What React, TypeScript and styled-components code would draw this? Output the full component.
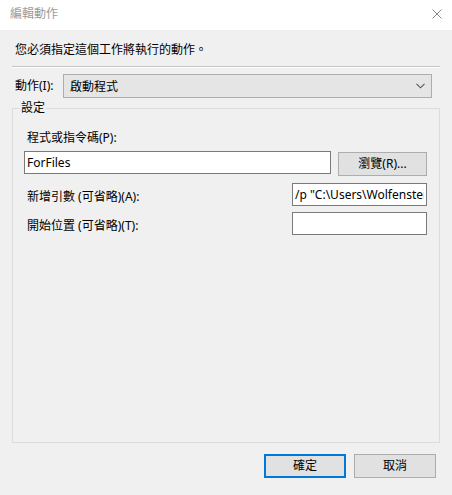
import React from "react";
import styled, { createGlobalStyle } from "styled-components";

const GlobalStyle = createGlobalStyle`
  html, body {
    margin: 0;
    padding: 0;
    background: #f0f0f0;
  }
  body {
    font-family: "Noto Sans", "Noto Sans CJK TC", sans-serif;
    font-size: 12px;
    color: #000;
  }
  * { box-sizing: border-box; }
`;

const Window = styled.div`
  width: 452px;
  height: 495px;
  display: flex;
  flex-direction: column;
  background: #f0f0f0;
  overflow: hidden;
`;

const TitleBar = styled.div`
  height: 30px;
  flex: none;
  background: #ffffff;
  display: flex;
  align-items: center;
  justify-content: space-between;
  padding: 0 10px 2px 10px;
`;

const Title = styled.span`
  color: #999999;
  font-size: 12px;
  line-height: 16px;
`;

const CloseIcon = styled.svg`
  width: 10px;
  height: 10px;
  display: block;
`;

const Body = styled.div`
  flex: 1;
  display: flex;
  flex-direction: column;
  padding: 0 12px 17px 12px;
`;

const Instruction = styled.div`
  margin-top: 12px;
  padding-left: 3px;
  line-height: 16px;
`;

const Separator = styled.div`
  margin-top: 8px;
  height: 2px;
  border-top: 1px solid #c4c4c4;
  border-bottom: 1px solid #ffffff;
`;

const ActionRow = styled.div`
  margin-top: 6px;
  display: flex;
  align-items: center;
`;

const ActionLabel = styled.span`
  width: 51px;
  padding-left: 3px;
  line-height: 16px;
`;

const Combo = styled.div`
  width: 369px;
  height: 24px;
  background: #e5e5e5;
  border: 1px solid #adadad;
  display: flex;
  align-items: center;
  justify-content: space-between;
  padding: 0 6px 0 6px;
`;

const Chevron = styled.svg`
  width: 9px;
  height: 6px;
  display: block;
`;

const Group = styled.fieldset`
  flex: 1;
  margin: 2px 0 0 0;
  padding: 0;
  border: 1px solid #dcdcdc;
  min-width: 0;
  display: flex;
  flex-direction: column;
`;

const Legend = styled.legend`
  margin-left: 7px;
  padding: 0 1px;
  line-height: 16px;
`;

const GroupInner = styled.div`
  padding: 14px 12px 0 11px;
  display: flex;
  flex-direction: column;
`;

const FieldLabel = styled.div`
  padding-left: 3px;
  line-height: 16px;
`;

const ProgramRow = styled.div`
  margin-top: 5px;
  display: flex;
  align-items: flex-start;
  justify-content: space-between;
`;

const TextBox = styled.input<{ $w: number }>`
  width: ${(p) => p.$w}px;
  height: 23px;
  border: 1px solid #7a7a7a;
  background: #ffffff;
  padding: 0 2px;
  margin: 0;
  font-family: "Noto Sans", "Noto Sans CJK TC", sans-serif;
  font-size: 12px;
  color: #000;
  outline: none;
`;

const Button = styled.button<{ $default?: boolean; $w: number }>`
  width: ${(p) => p.$w}px;
  height: 24px;
  margin: 0;
  padding: 0;
  background: #e1e1e1;
  border: ${(p) => (p.$default ? "2px solid #0078d7" : "1px solid #adadad")};
  font-family: "Noto Sans", "Noto Sans CJK TC", sans-serif;
  font-size: 12px;
  color: #000;
  line-height: 16px;
`;

const BrowseButton = styled(Button)`
  margin-top: 1px;
`;

const OptionRow = styled.div<{ $gap: number }>`
  margin-top: ${(p) => p.$gap}px;
  display: flex;
  align-items: center;
  justify-content: space-between;
`;

const OptionLabel = styled.span`
  padding-left: 3px;
  padding-top: 4px;
  line-height: 16px;
`;

const Footer = styled.div`
  margin-top: 11px;
  display: flex;
  justify-content: flex-end;
  gap: 8px;
  padding-right: 4px;
`;

export default function App() {
  return (
    <>
      <GlobalStyle />
      <Window>
        <TitleBar>
          <Title>編輯動作</Title>
          <CloseIcon viewBox="0 0 10 10">
            <path d="M0.5 0.5 L9.5 9.5 M9.5 0.5 L0.5 9.5" stroke="#8a8a8a" strokeWidth="1" fill="none" />
          </CloseIcon>
        </TitleBar>
        <Body>
          <Instruction>您必須指定這個工作將執行的動作。</Instruction>
          <Separator />
          <ActionRow>
            <ActionLabel>動作(I):</ActionLabel>
            <Combo>
              <span>啟動程式</span>
              <Chevron viewBox="0 0 9 6">
                <path d="M0.5 0.8 L4.5 4.8 L8.5 0.8" stroke="#555" strokeWidth="1.1" fill="none" />
              </Chevron>
            </Combo>
          </ActionRow>
          <Group>
            <Legend>設定</Legend>
            <GroupInner>
              <FieldLabel>程式或指令碼(P):</FieldLabel>
              <ProgramRow>
                <TextBox $w={307} defaultValue="ForFiles" />
                <BrowseButton $w={89}>瀏覽(R)...</BrowseButton>
              </ProgramRow>
              <OptionRow $gap={7}>
                <OptionLabel>新增引數 (可省略)(A):</OptionLabel>
                <TextBox $w={135} defaultValue={'/p "C:\\Users\\Wolfenstein\\Downloads" /s /d -30 /c "cmd /c del @path"'} />
              </OptionRow>
              <OptionRow $gap={6}>
                <OptionLabel>開始位置 (可省略)(T):</OptionLabel>
                <TextBox $w={135} defaultValue="" />
              </OptionRow>
            </GroupInner>
          </Group>
          <Footer>
            <Button $default $w={82}>確定</Button>
            <Button $w={82}>取消</Button>
          </Footer>
        </Body>
      </Window>
    </>
  );
}
